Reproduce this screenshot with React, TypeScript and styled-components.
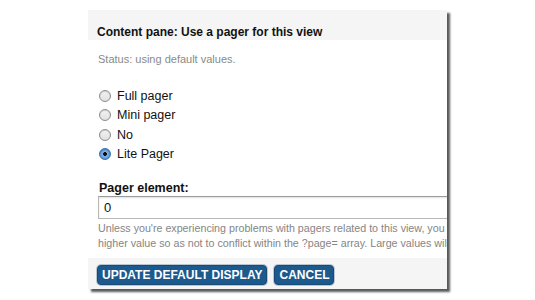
import React from "react"
import styled, { createGlobalStyle } from "styled-components"

const GlobalStyle = createGlobalStyle`
  html, body {
    margin: 0;
    padding: 0;
    background: #ffffff;
  }
  body {
    font-family: "Liberation Sans", Arial, sans-serif;
  }
`

const Page = styled.div`
  width: 535px;
  height: 300px;
  padding: 10px 0 0 88px;
  box-sizing: border-box;
  overflow: hidden;
`

const Panel = styled.div`
  width: 359px;
  background: #ffffff;
  overflow: hidden;
  box-shadow: 3px 3px 2px rgba(0, 0, 0, 0.65);
`

const Header = styled.div`
  height: 30px;
  box-sizing: border-box;
  padding: 15px 10px 0 9px;
  background: #f5f5f5;
  font-size: 12px;
  font-weight: bold;
  color: #111;
  white-space: nowrap;
`

const Body = styled.div`
  padding: 13px 10px 7px 10px;
  width: 460px;
`

const Status = styled.div`
  font-size: 11px;
  color: #8a8a8a;
  margin-bottom: 24px;
`

const RadioList = styled.div`
  display: flex;
  flex-direction: column;
  gap: 5.3px;
  margin-bottom: 20px;
`

const RadioRow = styled.label`
  display: flex;
  align-items: center;
  gap: 6px;
  font-size: 12.5px;
  color: #111;
  height: 14px;
`

const Dot = styled.span<{ $checked?: boolean }>`
  width: 12px;
  height: 12px;
  border-radius: 50%;
  box-sizing: border-box;
  margin-left: 1px;
  border: 1px solid ${(p) => (p.$checked ? "#3a6ea8" : "#8c8c8c")};
  background: ${(p) =>
    p.$checked
      ? "radial-gradient(circle, #111 0 1.6px, #7fb2e6 2.2px, #3d7fc6 100%)"
      : "linear-gradient(#f4f4f4, #e0e0e0)"};
  box-shadow: inset 0 1px 1px rgba(0, 0, 0, 0.15);
`

const FieldLabel = styled.div`
  font-size: 12.5px;
  font-weight: bold;
  color: #111;
  margin-bottom: 1px;
  padding-left: 1px;
`

const TextInput = styled.div`
  height: 23px;
  box-sizing: border-box;
  border: 1px solid #b8b8b8;
  border-top-color: #9a9a9a;
  box-shadow: inset 0 1px 2px rgba(0, 0, 0, 0.12);
  padding: 3px 5px 0 5px;
  font-size: 13px;
  color: #111;
  margin-bottom: 2px;
`

const Help = styled.div`
  font-size: 10.7px;
  line-height: 15px;
  color: #858585;
  white-space: nowrap;
`

const Footer = styled.div`
  background: #f5f5f5;
  height: 31px;
  box-sizing: border-box;
  padding: 7px 10px 0 9px;
  display: flex;
  gap: 7px;
  align-items: flex-start;
`

const Button = styled.button`
  height: 20px;
  box-sizing: border-box;
  padding: 0 4px;
  background: #1c5a8e;
  color: #ffffff;
  border: 1px solid #174a75;
  border-radius: 4px;
  box-shadow: 0 0 0 1px #b9c6d2;
  font-family: "Liberation Sans", Arial, sans-serif;
  font-size: 12px;
  font-weight: bold;
  line-height: 18px;
  text-transform: uppercase;
  cursor: pointer;
`

const options = [
  { label: "Full pager", checked: false },
  { label: "Mini pager", checked: false },
  { label: "No", checked: false },
  { label: "Lite Pager", checked: true },
]

export default function App() {
  return (
    <Page>
      <GlobalStyle />
      <Panel>
        <Header>Content pane: Use a pager for this view</Header>
        <Body>
          <Status>Status: using default values.</Status>
          <RadioList>
            {options.map((o) => (
              <RadioRow key={o.label}>
                <Dot $checked={o.checked} />
                {o.label}
              </RadioRow>
            ))}
          </RadioList>
          <FieldLabel>Pager element:</FieldLabel>
          <TextInput>0</TextInput>
          <Help>
            Unless you're experiencing problems with pagers related to this view, you should leave this at 0.
          </Help>
          <Help>
            higher value so as not to conflict within the ?page= array. Large values will add a lot of commas.
          </Help>
        </Body>
        <Footer>
          <Button>Update default display</Button>
          <Button>Cancel</Button>
        </Footer>
      </Panel>
    </Page>
  )
}
